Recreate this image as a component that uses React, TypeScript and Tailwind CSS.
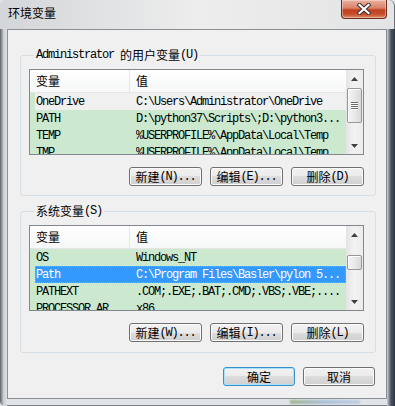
import type { ReactNode } from 'react';

const CJK_RE = /([\u3400-\u9fff]+)/;

// splits a label into CJK runs (12px) and ascii runs (6px mono, like SimSun)
function Txt({ s }: { s: string }) {
  const parts = s.split(CJK_RE).filter(Boolean);
  return (
    <>
      {parts.map((p, i) =>
        CJK_RE.test(p) ? (
          <span key={i} className="font-['Noto_Sans_CJK_SC',sans-serif] text-[12px] leading-[14px]">
            {p}
          </span>
        ) : (
          <span
            key={i}
            className="font-['Liberation_Mono',monospace] text-[12px] leading-[14px] tracking-[-1.2px] whitespace-pre"
          >
            {p}
          </span>
        )
      )}
    </>
  );
}

type Row = { name: string; value: string; state?: 'focus' | 'inactive' };

const userRows: Row[] = [
  { name: 'OneDrive', value: 'C:\\Users\\Administrator\\OneDrive', state: 'inactive' },
  { name: 'PATH', value: 'D:\\python37\\Scripts\\;D:\\python3...' },
  { name: 'TEMP', value: '%USERPROFILE%\\AppData\\Local\\Temp' },
  { name: 'TMP', value: '%USERPROFILE%\\AppData\\Local\\Temp' },
];

const systemRows: Row[] = [
  { name: 'OS', value: 'Windows_NT' },
  { name: 'Path', value: 'C:\\Program Files\\Basler\\pylon 5...', state: 'focus' },
  { name: 'PATHEXT', value: '.COM;.EXE;.BAT;.CMD;.VBS;.VBE;....' },
  { name: 'PROCESSOR_AR...', value: 'x86' },
];

const Arrow = ({ up }: { up?: boolean }) => (
  <svg width="7" height="4" viewBox="0 0 7 4">
    <polygon points={up ? '3.5,0 7,4 0,4' : '0,0 7,0 3.5,4'} fill="#404040" />
  </svg>
);

function ScrollBar({ gap, thumb, grip }: { gap: string; thumb: string; grip?: boolean }) {
  return (
    <div className="w-[17px] shrink-0 flex flex-col bg-gradient-to-r from-[#e4e4e4] via-[#f3f3f3] to-[#ebebeb]">
      <div className="h-[17px] shrink-0 flex items-center justify-center">
        <Arrow up />
      </div>
      <div className={gap} />
      <div
        className={`${thumb} mx-[1px] shrink-0 rounded-[2px] border border-[#979797] bg-gradient-to-r from-[#f4f4f4] via-[#e9e9e9] to-[#d9d9d9] shadow-[inset_1px_1px_0_#ffffff] flex flex-col items-center justify-center`}
      >
        {grip && (
          <div className="flex flex-col">
            {[0, 1, 2, 3].map((i) => (
              <div key={i} className="w-[7px] h-[2px] border-t border-[#6a6a6a] bg-white" />
            ))}
          </div>
        )}
      </div>
      <div className="flex-1" />
      <div className="h-[17px] shrink-0 flex items-center justify-center">
        <Arrow />
      </div>
    </div>
  );
}

function VarList({ rows, gap, thumb, grip }: { rows: Row[]; gap: string; thumb: string; grip?: boolean }) {
  return (
    <div className="w-[335px] h-[86px] border border-[#828790] bg-[#cce8cf] flex">
      <div className="w-[316px] flex flex-col overflow-hidden">
        <div className="h-[23px] shrink-0 flex bg-gradient-to-b from-white to-[#f6f7f8] border-b border-[#e5e5e5]">
          <div className="w-[100px] pl-[6px] flex items-center border-r border-[#e3e8ee]">
            <Txt s="变量" />
          </div>
          <div className="flex-1 pl-[6px] flex items-center">
            <Txt s="值" />
          </div>
        </div>
        {rows.map((r) => (
          <div
            key={r.name}
            className={`h-[17px] shrink-0 ml-[5px] flex items-center border ${
              r.state === 'focus'
                ? 'bg-[#3399ff] text-white border-dotted border-[#e89a3c]'
                : r.state === 'inactive'
                ? 'bg-[#f0f0f0] border-transparent'
                : 'border-transparent'
            }`}
          >
            <div className="w-[100px] flex items-center overflow-hidden">
              <Txt s={r.name} />
            </div>
            <div className="flex-1 flex items-center overflow-hidden">
              <Txt s={r.value} />
            </div>
          </div>
        ))}
      </div>
      <ScrollBar gap={gap} thumb={thumb} grip={grip} />
    </div>
  );
}

function Btn({ children, primary }: { children: ReactNode; primary?: boolean }) {
  return (
    <div
      className={`w-[72px] h-[19px] flex items-center justify-center rounded-[3px] border bg-[linear-gradient(to_bottom,#f2f2f2_0%,#ebebeb_50%,#dddddd_50%,#cfcfcf_100%)] ${
        primary
          ? 'border-[#3592cf] shadow-[inset_0_0_0_1px_#a8e2fa]'
          : 'border-[#707070] shadow-[inset_0_0_0_1px_#fbfbfb]'
      }`}
    >
      {children}
    </div>
  );
}

function Group({
  label,
  rows,
  buttons,
  gap,
  thumb,
  grip,
  className,
}: {
  label: string;
  rows: Row[];
  buttons: string[];
  gap: string;
  thumb: string;
  grip?: boolean;
  className: string;
}) {
  return (
    <fieldset className={`w-[356px] border border-[#d5dfe5] rounded-[3px] pl-[8px] pt-[7px] ${className}`}>
      <legend className="ml-[5px] px-[2px] h-[14px] flex items-center">
        <Txt s={label} />
      </legend>
      <VarList rows={rows} gap={gap} thumb={thumb} grip={grip} />
      <div className="w-[335px] mt-[12px] flex justify-end gap-[8px]">
        {buttons.map((b) => (
          <div
            key={b}
            className="w-[73px] h-[19px] flex items-center justify-center rounded-[3px] border border-[#707070] shadow-[inset_0_0_0_1px_#fbfbfb] bg-[linear-gradient(to_bottom,#f2f2f2_0%,#ebebeb_50%,#dddddd_50%,#cfcfcf_100%)]"
          >
            <Txt s={b} />
          </div>
        ))}
      </div>
    </fieldset>
  );
}

export default function App() {
  return (
    <div className="w-[395px] h-[406px] flex flex-col overflow-hidden bg-[#e1e4e7] text-black font-['Noto_Sans_CJK_SC',sans-serif]">
      {/* title bar */}
      <div className="h-[29px] shrink-0 flex items-start justify-between rounded-t-[6px] bg-gradient-to-r from-[#d3d6d9] via-[#ededed] to-[#e3e4e5] border-r border-[#6d7075]">
        <span className="ml-[8px] mt-[5px] text-[12px] leading-[16px]">环境变量</span>
        <div className="mr-[7px] w-[46px] h-[19px] rounded-b-[4px] border border-t-0 border-[#6b2b1f] bg-[linear-gradient(to_bottom,#eab1a0_0%,#d98068_45%,#c2401f_55%,#c64d2b_78%,#df8e62_100%)] shadow-[inset_0_0_0_1px_rgba(255,255,255,0.35)] flex items-center justify-center">
          <svg width="14" height="12" viewBox="0 0 14 12">
            <path d="M2.5 2 L11.5 10 M11.5 2 L2.5 10" stroke="#3b2c2a" strokeWidth="4.2" strokeLinecap="square" />
            <path d="M2.5 2 L11.5 10 M11.5 2 L2.5 10" stroke="#ffffff" strokeWidth="2.2" strokeLinecap="square" />
          </svg>
        </div>
      </div>

      <div className="flex flex-1 min-h-0">
        <div className="w-[7px] shrink-0 bg-gradient-to-r from-[#5d6064] via-[#c9ccd0] to-[#dfe2e5]" />

        {/* client area */}
        <div className="w-[380px] shrink-0 border border-[#8b8f94] bg-[#f0f0f0] flex flex-col pl-[12px] pt-[18px]">
          <Group
            label="Administrator 的用户变量(U)"
            rows={userRows}
            buttons={['新建(N)...', '编辑(E)...', '删除(D)']}
            gap="h-[1px]"
            thumb="h-[35px]"
            grip
            className="pb-[9px]"
          />
          <Group
            label="系统变量(S)"
            rows={systemRows}
            buttons={['新建(W)...', '编辑(I)...', '删除(L)']}
            gap="h-[12px]"
            thumb="h-[15px]"
            className="mt-[8px] pb-[10px]"
          />
          <div className="mt-[14px] mr-[11px] flex justify-end gap-[8px]">
            <Btn primary>
              <Txt s="确定" />
            </Btn>
            <Btn>
              <Txt s="取消" />
            </Btn>
          </div>
        </div>

        <div className="w-[8px] shrink-0 bg-gradient-to-r from-[#cfd2d6] via-[#4a5262] to-[#2f3540]" />
      </div>

      {/* bottom frame */}
      <div className="h-[7px] shrink-0 flex">
        <div className="w-[7px] bg-gradient-to-r from-[#5d6064] via-[#c9ccd0] to-[#dfe2e5] rounded-bl-[5px]" />
        <div className="w-[380px] flex border-b border-[#7d8085] bg-[#e1e4e7]">
          <div className="w-[283px]" />
          <div className="w-[70px] h-[4px] mt-[1px] bg-gradient-to-r from-[#9fb38e] via-[#a8bfd8] to-[#bccde0] blur-[1px]" />
        </div>
        <div className="w-[8px] bg-gradient-to-r from-[#cfd2d6] via-[#4a5262] to-[#2f3540]" />
      </div>
    </div>
  );
}
